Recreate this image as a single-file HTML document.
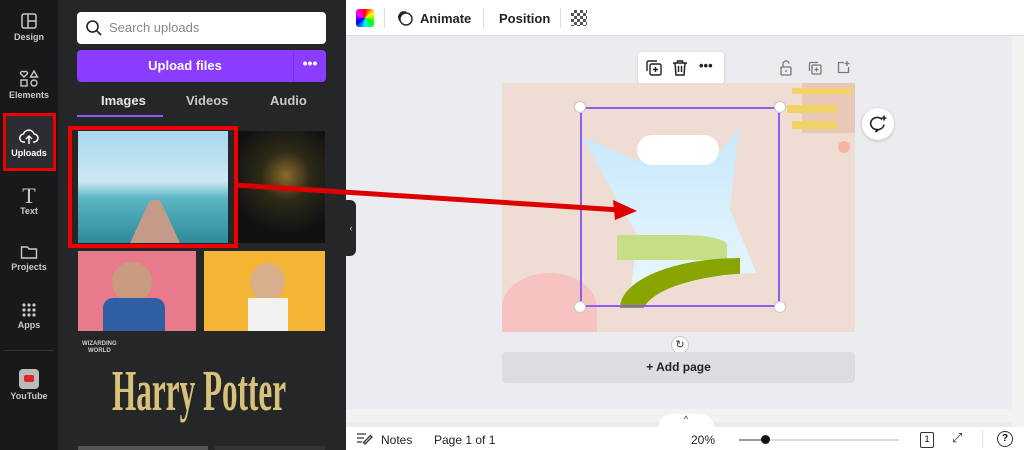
<!DOCTYPE html><html><head><style>
*{margin:0;padding:0;box-sizing:border-box}
body{width:1024px;height:450px;overflow:hidden;font-family:"Liberation Sans",sans-serif;background:#ebecf0;position:relative}
.a{position:absolute}
.rail{left:0;top:0;width:58px;height:450px;background:#18191b}
.ri{position:absolute;left:0;width:58px;text-align:center;color:#c8c9cc;font-size:9px;font-weight:bold}
.panel{left:58px;top:0;width:288px;height:450px;background:#252627}
.tab{font-size:13px;font-weight:bold;color:#c8c9cc}
</style></head><body>
<div class="a rail"></div>
<div class="ri" style="top:12px"><svg width="18" height="18" viewBox="0 0 18 18" fill="none" stroke="#c8c9cc" stroke-width="1.5"><rect x="2" y="2" width="14" height="14" rx="2"/><path d="M8 2v14M8 9h8"/></svg><div>Design</div></div>
<div class="ri" style="top:70px"><svg width="20" height="18" viewBox="0 0 20 18" fill="none" stroke="#c8c9cc" stroke-width="1.4"><path d="M5 7L1.5 3.5a2 2 0 0 1 3.5-1.5a2 2 0 0 1 3.5 1.5z"/><path d="M15 1l3.5 6h-7z"/><rect x="2" y="10" width="6" height="6"/><circle cx="15" cy="13" r="3"/></svg><div>Elements</div></div>
<div class="a" style="left:3px;top:113px;width:53px;height:58px;border:3px solid #e00;background:#2c2d30"></div>
<div class="ri" style="top:128px;color:#fff"><svg width="20" height="18" viewBox="0 0 20 18" fill="none" stroke="#fff" stroke-width="1.5"><path d="M6 14H5a4 4 0 0 1-.5-8A5.5 5.5 0 0 1 15 6a4 4 0 0 1 0 8h-1"/><path d="M10 16V8M7 11l3-3 3 3"/></svg><div>Uploads</div></div>
<div class="ri" style="top:186px"><div style="font-family:'Liberation Serif',serif;font-size:22px;font-weight:normal;line-height:20px">T</div><div>Text</div></div>
<div class="ri" style="top:244px"><svg width="18" height="16" viewBox="0 0 18 16" fill="none" stroke="#c8c9cc" stroke-width="1.4"><path d="M1.5 3h6l1.5 2h7.5v9h-15z"/></svg><div>Projects</div></div>
<div class="ri" style="top:302px"><svg width="16" height="16" viewBox="0 0 16 16" fill="#c8c9cc"><circle cx="3" cy="3" r="1.6"/><circle cx="8" cy="3" r="1.6"/><circle cx="13" cy="3" r="1.6"/><circle cx="3" cy="8" r="1.6"/><circle cx="8" cy="8" r="1.6"/><circle cx="13" cy="8" r="1.6"/><circle cx="3" cy="13" r="1.6"/><circle cx="8" cy="13" r="1.6"/><circle cx="13" cy="13" r="1.6"/></svg><div>Apps</div></div>
<div class="a" style="left:4px;top:350px;width:50px;height:1px;background:#333"></div>
<div class="ri" style="top:369px"><div style="width:20px;height:20px;margin:0 auto 2px;background:#bbb;border-radius:4px;position:relative"><div style="position:absolute;left:5px;top:6px;width:10px;height:7px;background:#e0242a;border-radius:2px"></div></div><div>YouTube</div></div>

<div class="a panel"></div>
<div class="a" style="left:77px;top:12px;width:249px;height:32px;background:#fff;border-radius:4px"></div>
<svg class="a" style="left:85px;top:19px" width="18" height="18" fill="none" stroke="#222" stroke-width="1.6"><circle cx="7.5" cy="7.5" r="5.5"/><path d="M11.5 11.5l4.5 4.5"/></svg>
<div class="a" style="left:109px;top:20px;font-size:13px;color:#888">Search uploads</div>
<div class="a" style="left:77px;top:50px;width:249px;height:32px;background:#8b3dff;border-radius:4px"></div>
<div class="a" style="left:293px;top:50px;width:1px;height:32px;background:#7a30e6"></div>
<div class="a" style="left:77px;top:58px;width:216px;text-align:center;color:#fff;font-size:13px;font-weight:bold">Upload files</div>
<div class="a" style="left:294px;top:55px;width:32px;text-align:center;color:#fff;font-size:14px;font-weight:bold">•••</div>
<div class="a tab" style="left:101px;top:93px;color:#e8e8e8">Images</div>
<div class="a tab" style="left:186px;top:93px">Videos</div>
<div class="a tab" style="left:270px;top:93px">Audio</div>
<div class="a" style="left:77px;top:115px;width:86px;height:2px;background:#8b5cf6"></div>
<div class="a" style="left:68px;top:126px;width:170px;height:122px;border:4px solid #e00"></div>
<div class="a" style="left:78px;top:131px;width:150px;height:112px;background:linear-gradient(#a7d7ee 0%,#cfe8f2 45%,#5ab6c4 60%,#2f8a99 100%)"></div>
<div class="a" style="left:130px;top:200px;width:50px;height:43px;background:#c49a88;clip-path:polygon(40% 0,60% 0,100% 100%,0 100%)"></div>
<div class="a" style="left:238px;top:131px;width:87px;height:112px;background:radial-gradient(circle at 55% 40%,#8b6a2a 0,#2d2a18 30%,#111 70%)"></div>
<div class="a" style="left:78px;top:251px;width:118px;height:80px;background:#e87a8c"></div>
<div class="a" style="left:112px;top:262px;width:40px;height:40px;border-radius:50%;background:#c99a80"></div>
<div class="a" style="left:103px;top:298px;width:62px;height:33px;background:#2f5ea3;border-radius:10px 10px 0 0"></div>
<div class="a" style="left:204px;top:251px;width:121px;height:80px;background:#f4b535"></div>
<div class="a" style="left:250px;top:263px;width:35px;height:38px;border-radius:50%;background:#d9ae8a"></div>
<div class="a" style="left:248px;top:298px;width:40px;height:33px;background:#f2f2f2"></div>
<div class="a" style="left:82px;top:341px;font-size:6px;color:#ccc;font-weight:bold;text-align:center;line-height:7px">WIZARDING<br>WORLD</div>
<div class="a" style="left:112px;top:362px;font-family:'Liberation Serif',serif;font-weight:bold;font-size:40px;line-height:40px;color:#d8c27a;white-space:nowrap;transform:scale(0.78,1.45);transform-origin:0 0">Harry Potter</div>
<div class="a" style="left:78px;top:446px;width:130px;height:4px;background:#555"></div>
<div class="a" style="left:215px;top:446px;width:110px;height:4px;background:#333"></div>
<div class="a" style="left:346px;top:200px;width:10px;height:56px;background:#252627;border-radius:0 6px 6px 0;color:#ccc;font-size:9px;line-height:56px;text-align:center">‹</div>

<div class="a" style="left:346px;top:0;width:678px;height:36px;background:#fff;border-bottom:1px solid #ddd"></div>
<div class="a" style="left:356px;top:9px;width:18px;height:18px;border-radius:3px;background:conic-gradient(#f00,#ff0,#0f0,#0ff,#00f,#f0f,#f00)"></div>
<div class="a" style="left:384px;top:8px;width:1px;height:20px;background:#ddd"></div>
<svg class="a" style="left:396px;top:9px" width="18" height="18" fill="none" stroke="#222" stroke-width="1.4"><circle cx="10" cy="10" r="6"/><path d="M4 12a6 6 0 0 1 6-9M2.5 9a7 7 0 0 1 5-6.5"/></svg>
<div class="a" style="left:420px;top:11px;font-size:13px;font-weight:bold;color:#222">Animate</div>
<div class="a" style="left:483px;top:8px;width:1px;height:20px;background:#ddd"></div>
<div class="a" style="left:499px;top:11px;font-size:13px;font-weight:bold;color:#222">Position</div>
<div class="a" style="left:560px;top:8px;width:1px;height:20px;background:#ddd"></div>
<div class="a" style="left:571px;top:10px;width:16px;height:16px;background:repeating-conic-gradient(#555 0 25%,#fff 0 50%) 0 0/6px 6px"></div>

<div class="a" style="left:638px;top:52px;width:86px;height:32px;background:#fff;border-radius:4px;box-shadow:0 1px 3px rgba(0,0,0,.15)"></div>
<svg class="a" style="left:645px;top:59px" width="18" height="18" fill="none" stroke="#222" stroke-width="1.4"><rect x="5" y="5" width="11" height="11" rx="1.5"/><path d="M12 2H3.5A1.5 1.5 0 0 0 2 3.5V12M10.5 8v5M8 10.5h5"/></svg>
<svg class="a" style="left:672px;top:59px" width="16" height="18" fill="none" stroke="#222" stroke-width="1.5"><path d="M1 4h14M5.5 4V2h5v2M3 4l1 12h8l1-12M6.5 7v6M9.5 7v6"/></svg>
<div class="a" style="left:699px;top:58px;font-size:13px;font-weight:bold;color:#222">•••</div>
<svg class="a" style="left:779px;top:60px" width="14" height="16" fill="none" stroke="#777" stroke-width="1.3"><rect x="2" y="7" width="10" height="8" rx="1"/><path d="M4 7V4.5a3 3 0 0 1 6-1"/><path d="M7 10v2"/></svg>
<svg class="a" style="left:808px;top:61px" width="14" height="14" fill="none" stroke="#777" stroke-width="1.3"><rect x="4" y="4" width="9" height="9" rx="1"/><path d="M10 1.5H2.5a1 1 0 0 0-1 1V10M8.5 6.5v4M6.5 8.5h4"/></svg>
<svg class="a" style="left:836px;top:60px" width="14" height="14" fill="none" stroke="#777" stroke-width="1.3"><path d="M8 2.5H2.5v10h10V7M11 1v5M8.5 3.5h5"/></svg>

<div class="a" style="left:502px;top:83px;width:353px;height:249px;background:#efdcd2;overflow:hidden">
 <div class="a" style="left:300px;top:0;width:53px;height:50px;background:#e8c9b8"></div>
 <div class="a" style="left:290px;top:5px;width:60px;height:6px;background:#f2d466"></div>
 <div class="a" style="left:285px;top:22px;width:50px;height:8px;background:#f2d466"></div>
 <div class="a" style="left:290px;top:38px;width:45px;height:8px;background:#f2d466"></div>
 <div class="a" style="left:336px;top:58px;width:12px;height:12px;border-radius:50%;background:#f5b5a5"></div>
 <div class="a" style="left:0;top:190px;width:95px;height:70px;border-radius:50% 50% 0 0;background:#f6c3c0"></div>
 <div class="a" style="left:80px;top:45px;width:185px;height:180px;background:linear-gradient(#c8e8fa,#eaf8fd);clip-path:polygon(0 5%,30% 18%,70% 18%,85% 0,80% 45%,100% 95%,50% 100%,25% 100%,30% 60%)"></div>
 <div class="a" style="left:115px;top:152px;width:110px;height:25px;background:#c6df86;border-radius:0 40% 0 0"></div>
 <div class="a" style="left:118px;top:175px;width:120px;height:50px;background:#8aa400;border-radius:100% 0 0 0"></div>
 <div class="a" style="left:140px;top:190px;width:200px;height:70px;background:#efdcd2;border-radius:60% 0 0 0"></div>
 <div class="a" style="left:135px;top:52px;width:82px;height:30px;background:#fff;border-radius:15px"></div>
</div>
<div class="a" style="left:580px;top:107px;width:200px;height:200px;border:2px solid #8b5cf6"></div>
<div class="a" style="left:574px;top:101px;width:12px;height:12px;border-radius:50%;background:#fff;border:1px solid #ccc"></div>
<div class="a" style="left:774px;top:101px;width:12px;height:12px;border-radius:50%;background:#fff;border:1px solid #ccc"></div>
<div class="a" style="left:574px;top:301px;width:12px;height:12px;border-radius:50%;background:#fff;border:1px solid #ccc"></div>
<div class="a" style="left:774px;top:301px;width:12px;height:12px;border-radius:50%;background:#fff;border:1px solid #ccc"></div>
<svg class="a" style="left:235px;top:180px" width="405" height="45"><path d="M0 5L385 30" stroke="#d00" stroke-width="5"/><path d="M378 20L402 31L380 40z" fill="#d00"/></svg>
<div class="a" style="left:862px;top:108px;width:32px;height:32px;border-radius:50%;background:#fff;box-shadow:0 1px 3px rgba(0,0,0,.2)"></div>
<svg class="a" style="left:868px;top:114px" width="20" height="20" fill="none" stroke="#222" stroke-width="1.6"><path d="M14 5.5A6.5 6 0 1 0 9 15.5l-1.5 2.5 3.5-2.5a6.5 6 0 0 0 5-5"/><path d="M16 1.5v5M13.5 4h5"/></svg>
<div class="a" style="left:671px;top:336px;width:18px;height:18px;border-radius:50%;background:#fff;border:1px solid #ccc;font-size:11px;text-align:center;line-height:16px;color:#333">↻</div>
<div class="a" style="left:502px;top:352px;width:353px;height:31px;background:#dcdde2;border-radius:4px;text-align:center;line-height:31px;font-size:12px;font-weight:bold;color:#222">+ Add page</div>
<div class="a" style="left:1012px;top:36px;width:12px;height:391px;background:#f2f2f2"></div>
<div class="a" style="left:346px;top:409px;width:678px;height:13px;background:#f2f2f2"></div>
<div class="a" style="left:658px;top:414px;width:56px;height:14px;background:#fff;border-radius:14px 14px 0 0;text-align:center;font-size:9px;color:#333">^</div>
<div class="a" style="left:346px;top:427px;width:678px;height:23px;background:#fff"></div>
<svg class="a" style="left:356px;top:432px" width="18" height="14" fill="none" stroke="#333" stroke-width="1.3"><path d="M1 2h9M1 6h7M1 10h5M9 12l7-7-1.5-1.5-7 7z"/></svg>
<div class="a" style="left:381px;top:433px;font-size:12px;color:#222">Notes</div>
<div class="a" style="left:434px;top:433px;font-size:12px;color:#222">Page 1 of 1</div>
<div class="a" style="left:691px;top:433px;font-size:12px;color:#222">20%</div>
<div class="a" style="left:739px;top:439px;width:160px;height:2px;background:#ddd"></div>
<div class="a" style="left:739px;top:439px;width:26px;height:2px;background:#999"></div>
<div class="a" style="left:761px;top:435px;width:9px;height:9px;border-radius:50%;background:#111"></div>
<div class="a" style="left:920px;top:432px;width:14px;height:16px;border:1.5px solid #333;border-radius:2px;font-size:9px;text-align:center;line-height:13px">1</div>
<div class="a" style="left:952px;top:430px;font-size:13px;color:#333">⤢</div>
<div class="a" style="left:982px;top:430px;width:1px;height:18px;background:#ddd"></div>
<div class="a" style="left:997px;top:431px;width:16px;height:16px;border:1.5px solid #333;border-radius:50%;font-size:10px;text-align:center;line-height:13px;font-weight:bold">?</div>
</body></html>
